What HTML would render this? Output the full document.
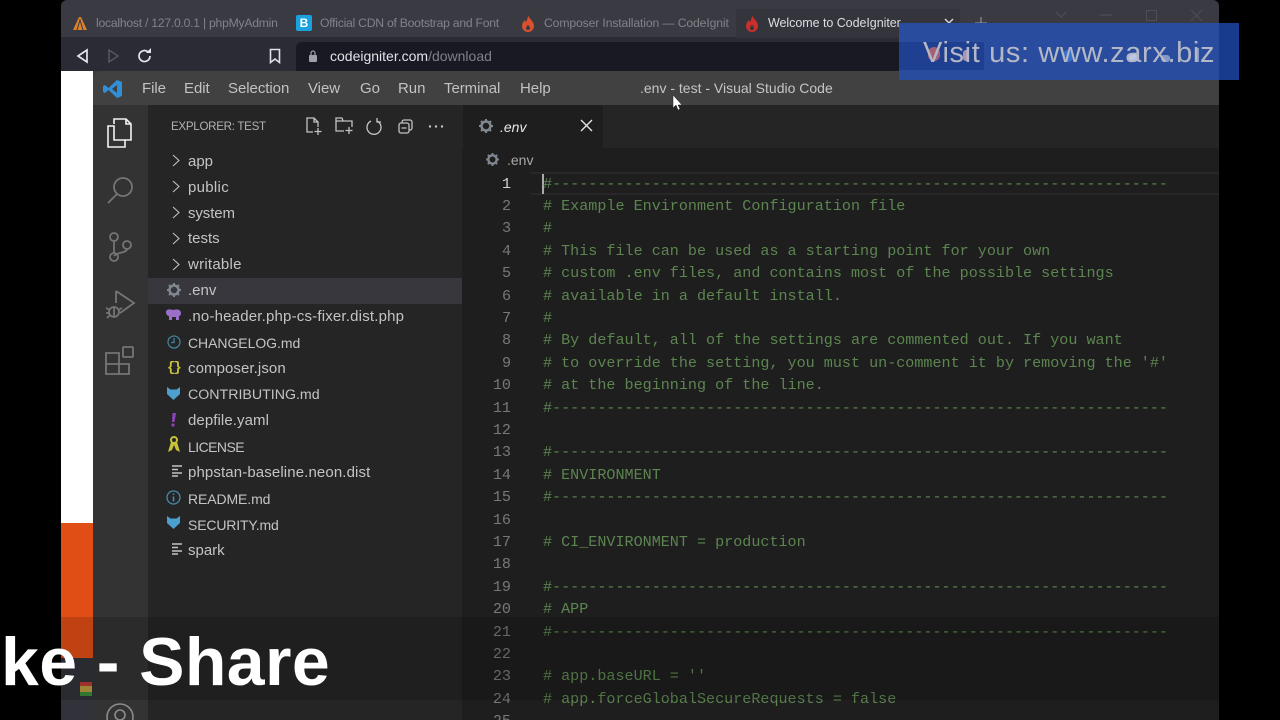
<!DOCTYPE html>
<html><head><meta charset="utf-8"><style>
html,body{margin:0;padding:0;background:#000;width:1280px;height:720px;overflow:hidden}
body{position:relative;font-family:"Liberation Sans",sans-serif;filter:blur(.35px)}
.a{position:absolute}
.t{position:absolute;white-space:nowrap;line-height:20px}
.tab{font-size:12.2px;color:#82828a;top:13px;letter-spacing:-.25px}
.m{font-size:15px;color:#c2c2c2;top:79px;letter-spacing:-.05px}
.f{position:absolute;left:188px;font-size:15px;color:#c4c4c4;white-space:nowrap;line-height:20px}
.n{position:absolute;left:480px;width:31px;text-align:right;font:15.1px/20px "Liberation Mono",monospace;color:#787878}
.c{position:absolute;left:543px;font:15.1px/20px "Liberation Mono",monospace;color:#5c8550;white-space:pre}
svg{position:absolute;overflow:visible}
</style></head><body>
<div class="a" style="left:61px;top:0;width:1158px;height:720px;background:#3a3a43;border-radius:6px 6px 0 0"></div>
<div class="a" style="left:61px;top:37px;width:1158px;height:34px;background:#2b2b35"></div>
<div class="a" style="left:736px;top:9px;width:224px;height:29px;background:#34343d"></div>
<div class="a" style="left:296px;top:42px;width:688px;height:29px;background:#191923;border-radius:6px 6px 0 0"></div>
<div class="a" style="left:61px;top:71px;width:32px;height:452px;background:#fff"></div>
<div class="a" style="left:61px;top:523px;width:32px;height:135px;background:#e04d15"></div>
<div class="a" style="left:61px;top:658px;width:32px;height:62px;background:#32323a"></div>

<svg style="left:71px;top:15px" width="18" height="18" viewBox="0 0 18 18"><path d="M2 15 8 2l2 0 6 13z" fill="#d9822b"/><path d="M6 15 9 5l3 10" fill="none" stroke="#39394a"/></svg>
<div class="t tab" style="left:96px">localhost / 127.0.0.1 | phpMyAdmin</div>
<div class="a" style="left:296px;top:15px;width:16px;height:16px;background:#1aa1e0;border-radius:2px;color:#fff;font:bold 12px/16px 'Liberation Sans',sans-serif;text-align:center">B</div>
<div class="t tab" style="left:320px">Official CDN of Bootstrap and Font</div>
<svg style="left:521px;top:15px" width="14" height="17" viewBox="0 0 14 17"><path d="M7 0c1 4 6 6 6 11a6 6 0 0 1-12 0c0-3 2-4 2-6l2 2c1-2 2-4 2-7z" fill="#d9512c"/><path d="M7 9c0 2 2 2 2 4a2 2 0 0 1-4 0c0-2 2-2 2-4z" fill="#3a3a43"/></svg>
<div class="t tab" style="left:544px;letter-spacing:-.13px">Composer Installation — CodeIgnit</div>
<svg style="left:745px;top:15px" width="14" height="17" viewBox="0 0 14 17"><path d="M7 0c1 4 6 6 6 11a6 6 0 0 1-12 0c0-3 2-4 2-6l2 2c1-2 2-4 2-7z" fill="#c9302c"/><path d="M7 9c0 2 2 2 2 4a2 2 0 0 1-4 0c0-2 2-2 2-4z" fill="#34343d"/></svg>
<div class="t tab" style="left:768px;color:#dcdce0;font-size:12.5px;letter-spacing:-.05px">Welcome to CodeIgniter</div>
<svg style="left:944px;top:18px" width="10" height="10"><path d="M1 1l8 8M9 1l-8 8" stroke="#d8d8e0" stroke-width="1.400"/></svg>
<svg style="left:975px;top:17px" width="12" height="12"><path d="M6 0v12M0 6h12" stroke="#8a8a92" stroke-width="1.300"/></svg>
<svg style="left:1055px;top:11px" width="12" height="8"><path d="M1 1l5 5 5-5" fill="none" stroke="#4e4e56" stroke-width="1.200"/></svg>
<svg style="left:1100px;top:14px" width="12" height="3"><path d="M0 1h12" stroke="#4e4e56" stroke-width="1.200"/></svg>
<svg style="left:1146px;top:10px" width="11" height="11"><rect x=".5" y=".5" width="10" height="10" fill="none" stroke="#4e4e56"/></svg>
<svg style="left:1191px;top:10px" width="11" height="11"><path d="M0 0l11 11M11 0L0 11" stroke="#4e4e56" stroke-width="1.100"/></svg>

<svg style="left:76px;top:48px" width="13" height="16"><path d="M11 2 2 8l9 6z" fill="none" stroke="#e4e4e8" stroke-width="1.700"/></svg>
<svg style="left:107px;top:48px" width="13" height="16"><path d="M2 2l9 6-9 6z" fill="none" stroke="#565660" stroke-width="1.500"/></svg>
<svg style="left:137px;top:48px" width="16" height="16" viewBox="0 0 16 16"><path d="M13 8a5.500 5.500 0 1 1-2-4.200" fill="none" stroke="#e6e6ea" stroke-width="1.700"/><path d="M9 5h5V0z" fill="#e6e6ea"/></svg>
<svg style="left:269px;top:48px" width="12" height="16"><path d="M1.500 1.500h9v13L6 11l-4.500 3.500z" fill="none" stroke="#e0e0e4" stroke-width="1.600"/></svg>
<svg style="left:308px;top:50px" width="10" height="12"><rect x="1" y="5" width="8" height="7" rx="1" fill="#a0a0a6"/><path d="M3 5V3a2 2 0 0 1 4 0v2" fill="none" stroke="#a0a0a6" stroke-width="1.200"/></svg>
<div class="t" style="left:330px;top:46px;font-size:14px;color:#e2e2e6">codeigniter.com<span style="color:#80808a">/download</span></div>
<div class="a" style="left:912px;top:47px;width:1px;height:17px;background:#44444e"></div>

<div class="a" style="left:93px;top:71px;width:1126px;height:649px;background:#1e1e1e;border-radius:6px 0 0 0;overflow:hidden">
<div class="a" style="left:0;top:0;width:1126px;height:34px;background:#414141"></div>
<div class="a" style="left:0;top:34px;width:55px;height:615px;background:#333"></div>
<div class="a" style="left:55px;top:34px;width:314px;height:615px;background:#252525"></div>
<div class="a" style="left:369px;top:34px;width:757px;height:43px;background:#252526"></div>
<div class="a" style="left:370px;top:34px;width:140px;height:43px;background:#1e1e1e"></div>
<div class="a" style="left:55px;top:207px;width:314px;height:26px;background:#37373d"></div>
<div class="a" style="left:438px;top:101px;width:688px;height:23px;border-top:2px solid #282828;border-bottom:2px solid #282828;box-sizing:border-box"></div>
<div class="a" style="left:449px;top:103px;width:2px;height:20px;background:#aaa"></div>
</div>

<svg style="left:103px;top:80px" width="19" height="18" viewBox="0 0 19 18"><path d="M14 0 19 2v14l-5 2L5.500 10 2 13 0 12V6l2-1 3.500 3zM14 5 9 9l5 4z" fill="#2f8fd8"/></svg>
<div class="t m" style="left:142px">File</div>
<div class="t m" style="left:184px">Edit</div>
<div class="t m" style="left:228px">Selection</div>
<div class="t m" style="left:308px">View</div>
<div class="t m" style="left:360px">Go</div>
<div class="t m" style="left:398px">Run</div>
<div class="t m" style="left:444px">Terminal</div>
<div class="t m" style="left:520px">Help</div>
<div class="t" style="left:640px;top:78px;font-size:14px;color:#c6c6c6">.env - test - Visual Studio Code</div>
<svg style="left:673px;top:95px" width="10" height="16"><path d="M0 0v13l3-3 2 5 2-1-2-4h4z" fill="#fff" stroke="#222" stroke-width=".5"/></svg>

<svg style="left:106px;top:118px" width="27" height="30" viewBox="0 0 27 30" fill="none" stroke="#f2f2f2" stroke-width="1.600"><path d="M8 6V1h12l5 5v16h-6M20 1v5h5"/><path d="M2 8h6v14h11v7H2zM8 8v14"/></svg>
<svg style="left:107px;top:176px" width="28" height="28" viewBox="0 0 28 28" fill="none" stroke="#757575" stroke-width="1.800"><circle cx="16" cy="11" r="9"/><path d="M10 18 1 27"/></svg>
<svg style="left:108px;top:232px" width="24" height="30" viewBox="0 0 24 30" fill="none" stroke="#757575" stroke-width="1.800"><circle cx="6" cy="5" r="4"/><circle cx="6" cy="25" r="4"/><circle cx="19" cy="13" r="4"/><path d="M6 9v12M19 17c0 4-10 3-13 7"/></svg>
<svg style="left:105px;top:289px" width="30" height="30" viewBox="0 0 30 30" fill="none" stroke="#757575" stroke-width="1.800"><path d="M11 2l18 12-14 10M11 2v12"/><circle cx="9" cy="23" r="5"/><path d="M1 19l4 2M1 24h3M2 29l3-3M17 19l-4 2M9 18v10"/></svg>
<svg style="left:105px;top:346px" width="30" height="30" viewBox="0 0 30 30" fill="none" stroke="#757575" stroke-width="1.800"><rect x="18" y="1" width="10" height="10" rx="1"/><path d="M1 7h13v21H1zM1 18h23v10H14M14 18V7"/></svg>
<svg style="left:106px;top:703px" width="28" height="17" viewBox="0 0 28 17" fill="none" stroke="#8c8c8c" stroke-width="1.600"><circle cx="14" cy="14" r="13"/><circle cx="14" cy="12" r="5"/></svg>
<div class="a" style="left:80px;top:682px;width:12px;height:14px;background:linear-gradient(#b83a30 0 30%,#b89a40 30% 70%,#3a8a3a 70%)"></div>

<div class="t" style="left:171px;top:117px;font-size:11.6px;color:#b2b2b2;letter-spacing:-.3px">EXPLORER: TEST</div>
<svg style="left:305px;top:117px" width="18" height="19" viewBox="0 0 18 19" fill="none" stroke="#c2c2c2" stroke-width="1.300"><path d="M8 15H2V1h7l4 4v5M9 1v4h4M13 11v7M9.500 14.500h7"/></svg>
<svg style="left:335px;top:117px" width="19" height="19" viewBox="0 0 19 19" fill="none" stroke="#c2c2c2" stroke-width="1.300"><path d="M9 14H1V1h6l1 3h9v6M1 4h7M14 10v7M10.500 13.500h7"/></svg>
<svg style="left:366px;top:118px" width="16" height="17" viewBox="0 0 16 17" fill="none" stroke="#c2c2c2" stroke-width="1.300"><path d="M5 3a7 7 0 1 0 6 0M11 0v4h4"/></svg>
<svg style="left:398px;top:119px" width="15" height="15" viewBox="0 0 15 15" fill="none" stroke="#c2c2c2" stroke-width="1.300"><rect x="1" y="4" width="10" height="10" rx="2"/><path d="M4 4V3a2 2 0 0 1 2-2h6a2 2 0 0 1 2 2v6a2 2 0 0 1-2 2h-1M3.500 9h5"/></svg>
<svg style="left:428px;top:125px" width="16" height="3"><circle cx="2" cy="1.500" r="1.200" fill="#c2c2c2"/><circle cx="8" cy="1.500" r="1.200" fill="#c2c2c2"/><circle cx="14" cy="1.500" r="1.200" fill="#c2c2c2"/></svg>

<svg style="left:172px;top:154px" width="8" height="240" fill="none" stroke="#c0c0c0" stroke-width="1.100"><path d="M1 1l6 5.500-6 5.500M1 27l6 5.500-6 5.500M1 53l6 5.500-6 5.500M1 79l6 5.500-6 5.500M1 105l6 5.500-6 5.500"/></svg>
<div class="f" style="top:152px">app</div>
<div class="f" style="top:178px;letter-spacing:.3px">public</div>
<div class="f" style="top:204px;letter-spacing:-.1px">system</div>
<div class="f" style="top:229px">tests</div>
<div class="f" style="top:255px;letter-spacing:.25px">writable</div>
<div class="f" style="top:281px">.env</div>
<div class="f" style="top:307px;letter-spacing:.19px">.no-header.php-cs-fixer.dist.php</div>
<div class="f" style="top:333px;font-size:14px;letter-spacing:-.05px">CHANGELOG.md</div>
<div class="f" style="top:359px;letter-spacing:.08px">composer.json</div>
<div class="f" style="top:385px;font-size:14.2px;letter-spacing:0">CONTRIBUTING.md</div>
<div class="f" style="top:411px;letter-spacing:.08px">depfile.yaml</div>
<div class="f" style="top:437px;font-size:14px;letter-spacing:-.55px">LICENSE</div>
<div class="f" style="top:463px;letter-spacing:.12px">phpstan-baseline.neon.dist</div>
<div class="f" style="top:489px;font-size:14px;letter-spacing:-.1px">README.md</div>
<div class="f" style="top:515px;font-size:14px;letter-spacing:-.15px">SECURITY.md</div>
<div class="f" style="top:541px">spark</div>

<svg style="left:167px;top:283px" width="14" height="14" viewBox="0 0 14 14"><circle cx="7" cy="7" r="4.500" fill="none" stroke="#7f8790" stroke-width="2.500"/><path d="M7 0v3M7 11v3M0 7h3M11 7h3M2 2l2 2M10 10l2 2M12 2l-2 2M4 10l-2 2" stroke="#7f8790" stroke-width="2"/></svg>
<svg style="left:166px;top:309px" width="15" height="12" viewBox="0 0 15 12"><path d="M0 3c0-3 4-3 7-2 3-1 8-1 8 3 0 2-1 3-2 3v4h-3V8H6v3H3V7C1 7 0 5 0 3z" fill="#9a6fc8"/></svg>
<svg style="left:167px;top:335px" width="14" height="14" fill="none" stroke="#40829c" stroke-width="1.300"><circle cx="7" cy="7" r="6"/><path d="M7 3v4.500H4"/></svg>
<div class="t" style="left:167px;top:358px;font:bold 14px/20px 'Liberation Mono',monospace;color:#c9c23c;letter-spacing:-2px">{}</div>
<svg style="left:167px;top:387px" width="13" height="13"><path d="M0 0l3.500 2.500h6L13 0v7l-6.500 6L0 7z" fill="#4d9fd0"/></svg>
<svg style="left:171px;top:413px" width="6" height="14"><path d="M1.500 0h3.500L3.500 9H1z" fill="#8a45b8"/><circle cx="2" cy="12" r="1.600" fill="#8a45b8"/></svg>
<svg style="left:168px;top:436px" width="12" height="17"><circle cx="6" cy="4" r="3" fill="none" stroke="#c6c23a" stroke-width="2"/><path d="M3 6h6l3 10-4-2-2-5-2 5-4 2z" fill="#c6c23a"/></svg>
<svg style="left:172px;top:465px" width="10" height="12" stroke="#c4c4c4" stroke-width="1.600"><path d="M0 1h10M0 4.500h6M0 8h10M0 11h6"/></svg>
<svg style="left:166px;top:490px" width="15" height="15" fill="none" stroke="#4a8aa8" stroke-width="1.300"><circle cx="7.500" cy="7.500" r="6.500"/><path d="M7.500 6.500v5M7.500 3.500v1.500" stroke-width="1.600"/></svg>
<svg style="left:167px;top:516px" width="13" height="13"><path d="M0 0l3.500 2.500h6L13 0v7l-6.500 6L0 7z" fill="#4d9fd0"/></svg>
<svg style="left:172px;top:543px" width="10" height="12" stroke="#c4c4c4" stroke-width="1.600"><path d="M0 1h10M0 4.500h6M0 8h10M0 11h6"/></svg>

<svg style="left:479px;top:119px" width="14" height="14" viewBox="0 0 14 14"><circle cx="7" cy="7" r="4.500" fill="none" stroke="#7f8790" stroke-width="2.500"/><path d="M7 0v3M7 11v3M0 7h3M11 7h3M2 2l2 2M10 10l2 2M12 2l-2 2M4 10l-2 2" stroke="#7f8790" stroke-width="2"/></svg>
<div class="t" style="left:500px;top:117px;font-size:14px;font-style:italic;color:#e8e8e8">.env</div>
<svg style="left:581px;top:120px" width="11" height="11"><path d="M0 0l11 11M11 0L0 11" stroke="#e6e6e6" stroke-width="1.400"/></svg>
<svg style="left:486px;top:153px" width="13" height="13" viewBox="0 0 14 14"><circle cx="7" cy="7" r="4.500" fill="none" stroke="#7f8790" stroke-width="2.500"/><path d="M7 0v3M7 11v3M0 7h3M11 7h3M2 2l2 2M10 10l2 2M12 2l-2 2M4 10l-2 2" stroke="#7f8790" stroke-width="2"/></svg>
<div class="t" style="left:507px;top:150px;font-size:14px;color:#a8a8a8">.env</div>

<div class="n" style="top:174px;color:#d4d4d4">1</div>
<div class="n" style="top:196px">2</div>
<div class="n" style="top:218px">3</div>
<div class="n" style="top:241px">4</div>
<div class="n" style="top:263px">5</div>
<div class="n" style="top:286px">6</div>
<div class="n" style="top:308px">7</div>
<div class="n" style="top:330px">8</div>
<div class="n" style="top:353px">9</div>
<div class="n" style="top:375px">10</div>
<div class="n" style="top:398px">11</div>
<div class="n" style="top:420px">12</div>
<div class="n" style="top:442px">13</div>
<div class="n" style="top:465px">14</div>
<div class="n" style="top:487px">15</div>
<div class="n" style="top:510px">16</div>
<div class="n" style="top:532px">17</div>
<div class="n" style="top:554px">18</div>
<div class="n" style="top:577px">19</div>
<div class="n" style="top:599px">20</div>
<div class="n" style="top:622px">21</div>
<div class="n" style="top:644px">22</div>
<div class="n" style="top:666px">23</div>
<div class="n" style="top:689px">24</div>
<div class="n" style="top:711px">25</div>

<div class="c" style="top:174px">#--------------------------------------------------------------------</div>
<div class="c" style="top:196px"># Example Environment Configuration file</div>
<div class="c" style="top:218px">#</div>
<div class="c" style="top:241px"># This file can be used as a starting point for your own</div>
<div class="c" style="top:263px"># custom .env files, and contains most of the possible settings</div>
<div class="c" style="top:286px"># available in a default install.</div>
<div class="c" style="top:308px">#</div>
<div class="c" style="top:330px"># By default, all of the settings are commented out. If you want</div>
<div class="c" style="top:353px"># to override the setting, you must un-comment it by removing the '#'</div>
<div class="c" style="top:375px"># at the beginning of the line.</div>
<div class="c" style="top:398px">#--------------------------------------------------------------------</div>
<div class="c" style="top:442px">#--------------------------------------------------------------------</div>
<div class="c" style="top:465px"># ENVIRONMENT</div>
<div class="c" style="top:487px">#--------------------------------------------------------------------</div>
<div class="c" style="top:532px"># CI_ENVIRONMENT = production</div>
<div class="c" style="top:577px">#--------------------------------------------------------------------</div>
<div class="c" style="top:599px"># APP</div>
<div class="c" style="top:622px">#--------------------------------------------------------------------</div>
<div class="c" style="top:666px"># app.baseURL = ''</div>
<div class="c" style="top:689px"># app.forceGlobalSecureRequests = false</div>

<div class="a" style="left:899px;top:23px;width:320px;height:57px;background:#2a4c9f"></div>
<div class="a" style="left:899px;top:42px;width:85px;height:28px;background:#1f3f90"></div>
<div class="a" style="left:1219px;top:23px;width:20px;height:57px;background:#183a8f"></div>
<div class="a" style="left:928px;top:47px;width:12px;height:14px;border-radius:6px;background:#c86a70;opacity:.8"></div>
<div class="a" style="left:963px;top:50px;width:6px;height:11px;border-radius:3px;background:#d8b0cc;opacity:.75"></div>
<div class="a" style="left:1063px;top:50px;width:10px;height:12px;border-radius:5px;background:#3a7cd6;opacity:.8"></div>
<div class="a" style="left:1128px;top:54px;width:10px;height:8px;border-radius:4px;background:#dfe6f6;opacity:.8"></div>
<div class="a" style="left:1161px;top:55px;width:9px;height:7px;border-radius:3px;background:#c0cde8;opacity:.6"></div>
<div class="a" style="left:1195px;top:48px;width:4px;height:14px;background:#c0cde8;opacity:.6"></div>
<div class="t" style="left:923px;top:36px;font-size:29px;line-height:34px;color:#b4b8c6;letter-spacing:.63px">Visit us: www.zarx.biz</div>

<div class="a" style="left:0;top:617px;width:1219px;height:83px;background:rgba(0,0,0,.14)"></div>
<div class="t" style="left:1px;top:624px;font-size:68px;line-height:76px;font-weight:bold;color:#fff;letter-spacing:.4px">ke - Share</div>
</body></html>
